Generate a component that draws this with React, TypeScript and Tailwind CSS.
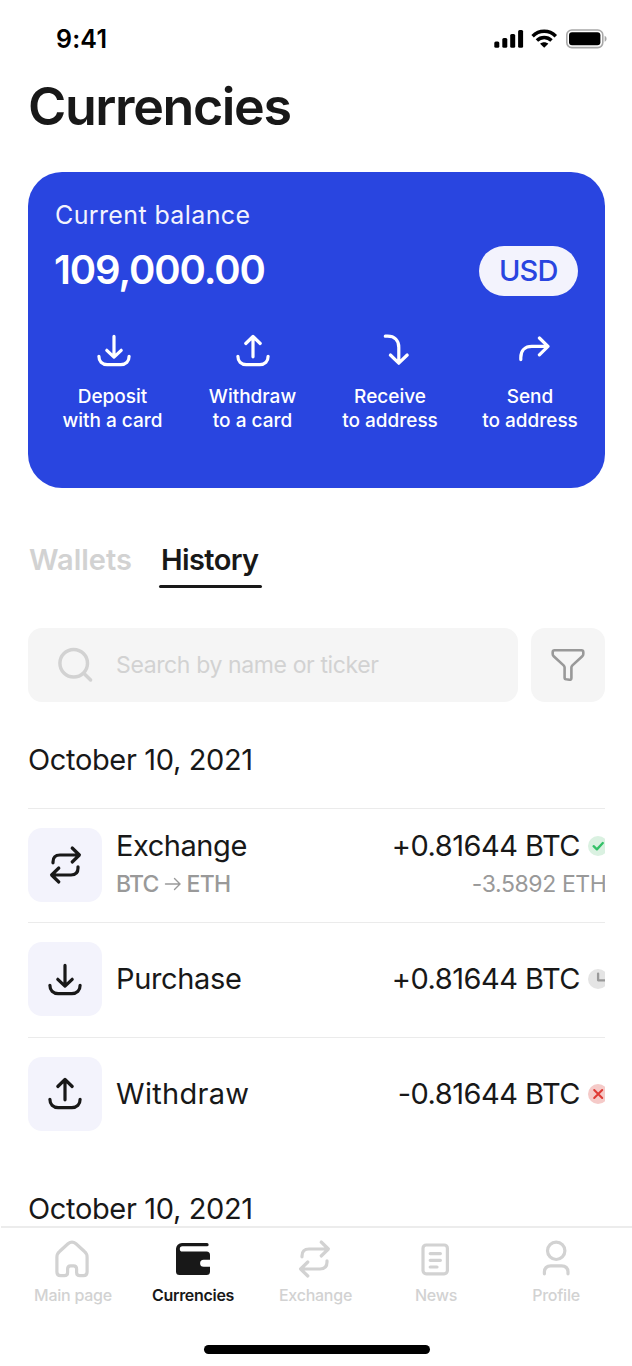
import type { ReactNode } from "react";

type Status = "done" | "pending" | "failed";

type Operation = {
  title: string;
  titleClass: string;
  icon: ReactNode;
  amount: string;
  status: Status;
  pair?: [string, string];
  secondary?: string;
};

// ─── Icons ────────────────────────────────────────────────────────────────────

function Icon({ children, width = 3.2, className = "" }: { children: ReactNode; width?: number; className?: string }) {
  return (
    <svg
      viewBox="0 0 40 40"
      fill="none"
      stroke="currentColor"
      strokeWidth={width}
      strokeLinecap="round"
      strokeLinejoin="round"
      className={`size-10 shrink-0 ${className}`}
    >
      {children}
    </svg>
  );
}

const tray = "M4.9 25.3C4.9 30.5 8 33.6 13.2 33.6H26.8C32 33.6 35.1 30.5 35.1 25.3";

const DepositIcon = ({ className }: { className?: string }) => (
  <Icon className={className}>
    <path d={tray} />
    <path d="M20 5.4V26M12.8 19.3L20 26.2 27.2 19.3" />
  </Icon>
);

const WithdrawIcon = ({ className }: { className?: string }) => (
  <Icon className={className}>
    <path d={tray} />
    <path d="M20 25.8V5.6M12.8 12.5L20 5.5 27.2 12.5" />
  </Icon>
);

const ReceiveIcon = () => (
  <Icon>
    <path d="M15.3 5.2H17.6C24.5 5.2 28.8 9.4 28.8 16.4V31.6M20.4 24L28.8 32.2 37.2 24" />
  </Icon>
);

const SendIcon = () => (
  <Icon>
    <path d="M10.8 28.6V26.4C10.8 19.6 15 15.4 21.8 15.4H37.6M29.4 7L38 15.4 29.4 23.8" />
  </Icon>
);

const ExchangeIcon = ({ className }: { className?: string }) => (
  <Icon className={className}>
    <path d="M8 17.8V17C8 12.6 10.6 10 15 10H34M27.2 3L34.4 10 27.2 17" />
    <path d="M33 21.8V23C33 27.4 30.4 30 26 30H7M13.8 23L6.6 30 13.8 37" />
  </Icon>
);

const HomeIcon = () => (
  <Icon className="-ml-[2px]">
    <path d="M4.9 18.2C4.9 15.8 5.9 13.8 7.8 12.3L16 4.8C18.4 2.7 21.6 2.7 24 4.8L32.2 12.3C34.1 13.8 35.1 15.8 35.1 18.2V33C35.1 35.6 34 36.7 31.4 36.7H28C25.6 36.7 24.6 35.9 24.6 33.6V30C24.6 27.6 23.8 26.8 21.6 26.8H18.6C16.4 26.8 15.6 27.6 15.6 30V33.6C15.6 35.9 14.6 36.7 12.2 36.7H8.6C6 36.7 4.9 35.6 4.9 33Z" />
  </Icon>
);

const WalletIcon = () => (
  <svg viewBox="0 0 40 40" fill="currentColor" className="size-10">
    <path d="M9 4H34a1.65 1.65 0 0 1 0 3.3H9.4a2.6 2.6 0 0 0 0 5.2H33.5a3.5 3.5 0 0 1 3.5 3.5V20.8H30.6a3.5 3.5 0 0 0 0 7H37V32.5a3.5 3.5 0 0 1-3.5 3.5H6.5a3.5 3.5 0 0 1-3.5-3.5V10a6 6 0 0 1 6-6Z" />
  </svg>
);

const NewsIcon = () => (
  <Icon>
    <rect x="7" y="6" width="24.4" height="28.8" rx="3.2" />
    <path d="M14.2 14.6H24.4M14.2 21.3H24.4M14.2 28H21" />
  </Icon>
);

const ProfileIcon = () => (
  <Icon>
    <circle cx="20.2" cy="11.8" r="8.7" />
    <path d="M8.4 34.8V33.4C8.4 29.3 10.8 26.9 14.9 26.9H25.5C29.6 26.9 32 29.3 32 33.4V34.8" />
  </Icon>
);

const FilterIcon = () => (
  <Icon width={2.6}>
    <path d="M6.6 5.2H33.4C34.6 5.2 35.3 5.9 35.3 7.1V9C35.3 9.9 35 10.6 34.3 11.2L24.4 20.4C23.7 21.1 23.4 21.7 23.4 22.6V33C23.4 34.3 22.6 34.9 21.4 34.7L18.2 34.3C17.1 34.1 16.6 33.5 16.6 32.4V22.6C16.6 21.7 16.3 21.1 15.6 20.4L5.7 11.2C5 10.6 4.7 9.9 4.7 9V7.1C4.7 5.9 5.4 5.2 6.6 5.2Z" />
  </Icon>
);

const SearchIcon = () => (
  <Icon width={3.5}>
    <circle cx="18.7" cy="18.2" r="13.8" />
    <path d="M29.5 29L35.6 35" />
  </Icon>
);

function StatusDot({ status }: { status: Status }) {
  if (status === "done") {
    return (
      <svg viewBox="0 0 20 20" fill="none" className="size-5 shrink-0">
        <circle cx="10" cy="10" r="10" fill="#daf1e1" />
        <path d="M5.6 10.2L8.9 13.4 14.8 7" stroke="#34c168" strokeWidth="2.3" strokeLinecap="round" strokeLinejoin="round" />
      </svg>
    );
  }
  if (status === "pending") {
    return (
      <svg viewBox="0 0 20 20" fill="none" className="size-5 shrink-0">
        <circle cx="10" cy="10" r="10" fill="#e4e4e4" />
        <path d="M10.1 4.6V11.3H17" stroke="#999" strokeWidth="2.3" strokeLinecap="round" strokeLinejoin="round" />
      </svg>
    );
  }
  return (
    <svg viewBox="0 0 20 20" fill="none" className="size-5 shrink-0">
      <circle cx="10" cy="10" r="10" fill="#f5cac8" />
      <path d="M6.2 6L14.2 14M14.2 6L6.2 14" stroke="#df3a34" strokeWidth="2" strokeLinecap="round" />
    </svg>
  );
}

// ─── Data ─────────────────────────────────────────────────────────────────────

const actions = [
  { icon: <DepositIcon className="ml-[3px]" />, lines: ["Deposit", "with a card"] },
  { icon: <WithdrawIcon className="ml-px" />, lines: ["Withdraw", "to a card"] },
  { icon: <ReceiveIcon />, lines: ["Receive", "to address"] },
  { icon: <SendIcon />, lines: ["Send", "to address"] },
];

const operations: Operation[] = [
  {
    title: "Exchange",
    titleClass: "tracking-[-0.45px]",
    icon: <ExchangeIcon className="-ml-px" />,
    amount: "+0.81644 BTC",
    status: "done",
    pair: ["BTC", "ETH"],
    secondary: "-3.5892 ETH",
  },
  { title: "Purchase", titleClass: "tracking-[-0.35px]", icon: <DepositIcon />, amount: "+0.81644 BTC", status: "pending" },
  { title: "Withdraw", titleClass: "tracking-[0.3px]", icon: <WithdrawIcon />, amount: "-0.81644 BTC", status: "failed" },
];

const navItems = [
  { label: "Main page", icon: <HomeIcon />, active: false },
  { label: "Currencies", icon: <WalletIcon />, active: true },
  { label: "Exchange", icon: <ExchangeIcon className="-ml-[3px]" />, active: false },
  { label: "News", icon: <NewsIcon />, active: false },
  { label: "Profile", icon: <ProfileIcon />, active: false },
];

// ─── Sections ─────────────────────────────────────────────────────────────────

function StatusBar() {
  return (
    <div className="flex h-[77px] items-center justify-between pr-[25px] pl-14 text-black">
      <span className="pt-[2px] text-[25px] font-semibold tracking-[0.2px]">9:41</span>
      <svg viewBox="0 0 114 20" className="h-5 w-[114px]">
        <rect x="1.3" y="12.5" width="5" height="6.3" rx="1.5" />
        <rect x="9.3" y="9" width="5" height="9.8" rx="1.5" />
        <rect x="17.2" y="5" width="5" height="13.8" rx="1.5" />
        <rect x="25.1" y="1" width="5" height="17.8" rx="1.5" />
        <g fill="none" stroke="#000" strokeWidth="3.5">
          <path d="M39.6 7.2C46.2 .7 56.2 .7 62.8 7.2" />
          <path d="M43.9 11.6C48.1 7.6 54.3 7.6 58.5 11.6" />
        </g>
        <path d="M51.2 18.8L47.1 14.7C49.4 12.7 53 12.7 55.3 14.7Z" />
        <rect x="73.8" y="1" width="36" height="17.6" rx="5" fill="none" stroke="#a8a8a8" strokeWidth="1.6" />
        <rect x="76" y="3.3" width="31.4" height="13" rx="3" />
        <path d="M111.6 6.8C114.2 7.8 114.2 11.8 111.6 12.8Z" fill="#a8a8a8" />
      </svg>
    </div>
  );
}

function BalanceCard() {
  return (
    <section className="mt-[37px] h-[316.5px] rounded-[34px] bg-[#2945e0] pt-[28.5px] text-white">
      <p className="pl-[27px] text-[25px] leading-[30px] tracking-[0.38px] text-[#f3f3fd]">Current balance</p>
      <div className="mt-[15.5px] flex h-[50.5px] items-center justify-between pr-[27px] pl-[26px]">
        <span className="pb-[2px] text-[40px] leading-none font-semibold tracking-[-1.1px]">109,000.00</span>
        <span className="flex h-full w-[99.5px] items-center justify-center rounded-full bg-[#f3f3fd] text-[29px] font-medium tracking-[-0.8px] text-[#2945e0]">
          USD
        </span>
      </div>
      <div className="mt-[35px] ml-[14.5px] grid grid-cols-[140px_140px_135px_145px]">
        {actions.map(({ icon, lines }) => (
          <button key={lines.join(" ")} className="flex flex-col items-center">
            {icon}
            <span className="mt-[14px] text-[19px] leading-6 font-medium whitespace-nowrap">
              {lines[0]}
              <br />
              {lines[1]}
            </span>
          </button>
        ))}
      </div>
    </section>
  );
}

function OperationRow({ op }: { op: Operation }) {
  return (
    <li className="flex h-[114.5px] overflow-hidden border-t border-[#ebebeb] pt-[19.2px]">
      <div className="flex size-[74px] shrink-0 items-center justify-center rounded-[14px] bg-[#f3f3fc] pt-px">
        {op.icon}
      </div>
      <div className="ml-[14px] flex h-[74px] flex-1 flex-col justify-center">
        <p className={`text-[29px] leading-[30px] ${op.titleClass}`}>{op.title}</p>
        {op.pair ? (
          <p className="mt-[8px] flex items-center gap-[5px] text-[23px] leading-[30px] font-medium tracking-[-0.8px] text-[#999]">
            {op.pair[0]}
            <svg viewBox="0 0 18 14" fill="none" stroke="currentColor" strokeWidth="1.4" strokeLinecap="round" className="h-3.5 w-[18px]">
              <path d="M1.5 7H16M10.5 1.5L16 7 10.5 12.5" />
            </svg>
            {op.pair[1]}
          </p>
        ) : null}
      </div>
      <div className="-mr-[2.5px] flex h-[74px] shrink-0 flex-col items-end justify-center">
        <p className="flex items-center gap-[7.5px] text-[29px] leading-[30px] tracking-[-0.5px]">
          {op.amount}
          <StatusDot status={op.status} />
        </p>
        {op.secondary ? (
          <p className="mt-[8px] mr-px text-[23px] leading-[30px] tracking-[-0.4px] text-[#999]">{op.secondary}</p>
        ) : null}
      </div>
    </li>
  );
}

function BottomNav() {
  return (
    <nav className="ml-px flex h-[140px] flex-col items-center border-t-2 border-[#ececec] bg-white">
      <div className="grid w-full grid-cols-[120px_120px_125px_116px_124px] pt-[10.5px] pl-[12px]">
        {navItems.map(({ label, icon, active }) => (
          <button
            key={label}
            className={`flex flex-col items-center ${active ? "font-semibold text-[#181818]" : "font-medium text-[#d2d2d2]"}`}
          >
            {icon}
            <span className={`mt-[6px] text-[16px] leading-5 ${active ? "tracking-[-0.3px]" : "tracking-[-0.25px]"}`}>
              {label}
            </span>
          </button>
        ))}
      </div>
      <div className="mt-[40.5px] h-[9px] w-[226px] rounded-full bg-black" />
    </nav>
  );
}

export default function App() {
  return (
    <div className="h-[1366px] w-[632px] overflow-hidden bg-white font-['Inter',sans-serif] text-[#181818]">
      <div className="h-[1226px] overflow-hidden">
        <StatusBar />
        <main className="mr-[27px] ml-7">
          <h1 className="pt-[1.5px] text-[52px] leading-[56px] font-semibold tracking-[-1.4px]">Currencies</h1>
          <BalanceCard />

          {/* Tabs */}
          <div className="mt-[56.5px] flex gap-[26px] text-[29px] leading-[30px] font-semibold">
            <button className="h-[43.5px] w-[104.5px] pb-[13.5px] pl-px text-left text-[#d2d2d2]">Wallets</button>
            <button className="flex w-[103.5px] flex-col items-center tracking-[-0.6px]">
              <span className="pr-px">History</span>
              <span className="mt-[10px] h-[3.5px] w-full rounded-full bg-[#181818]" />
            </button>
          </div>

          {/* Search */}
          <div className="mt-[39.5px] flex h-[74px] gap-[13.5px]">
            <div className="flex flex-1 items-center rounded-[14px] bg-[#f5f5f5] pl-[27px] text-[#d2d2d2]">
              <SearchIcon />
              <span className="ml-[21px] pt-px text-[23px] tracking-[-0.38px]">Search by name or ticker</span>
            </div>
            <button className="flex w-[74px] items-center justify-center rounded-[14px] bg-[#f5f5f5] text-[#999]">
              <FilterIcon />
            </button>
          </div>

          {/* History */}
          <h2 className="mt-[43px] text-[29px] leading-[30px] tracking-[-0.35px]">October 10, 2021</h2>
          <ul className="mt-[33.3px]">
            {operations.map((op) => (
              <OperationRow key={op.title} op={op} />
            ))}
          </ul>
          <h2 className="mt-[43px] text-[29px] leading-[30px] tracking-[-0.35px]">October 10, 2021</h2>
        </main>
      </div>
      <BottomNav />
    </div>
  );
}
